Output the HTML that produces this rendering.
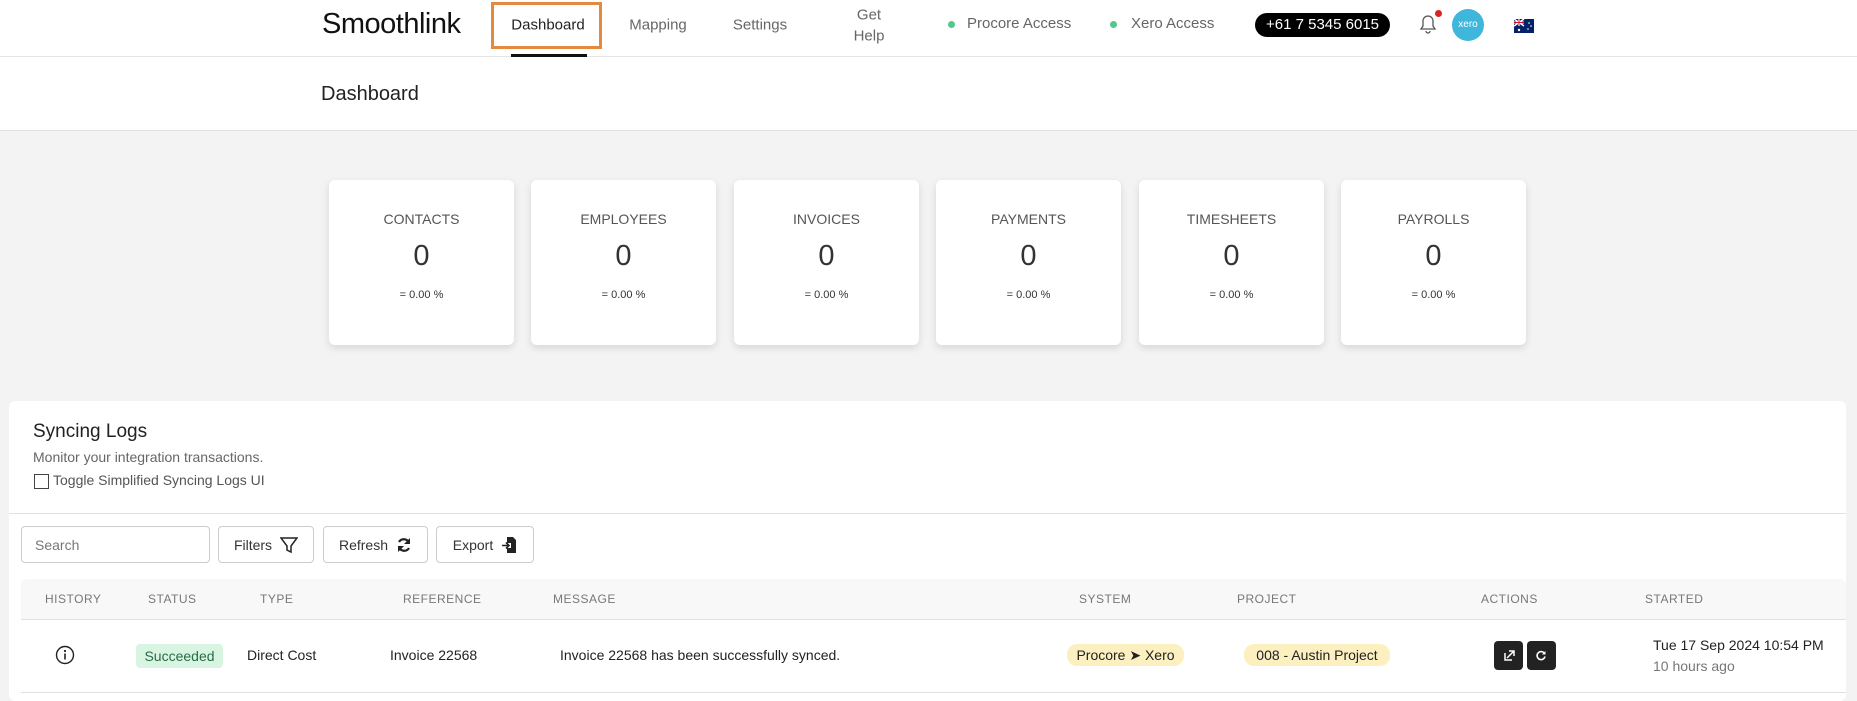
<!DOCTYPE html><html><head><meta charset="utf-8"><style>
*{box-sizing:border-box;margin:0;padding:0}
body{width:1857px;height:698px;overflow:hidden;background:#f3f3f3;font-family:"Liberation Sans",sans-serif;color:#222;position:relative}
.a{position:absolute;white-space:nowrap}
.hdr{position:absolute;left:0;top:0;width:1857px;height:57px;background:#fff;border-bottom:1px solid #e4e4e4}
.sub{position:absolute;left:0;top:57px;width:1857px;height:74px;background:#fff;border-bottom:1px solid #e0e0e0}
.nav{font-size:15px;color:#666;transform:translate(-50%,-50%)}
.card{position:absolute;top:180px;width:185px;height:165px;background:#fff;border-radius:6px;box-shadow:0 3px 8px rgba(0,0,0,.12);text-align:center}
.card .l{position:absolute;top:31px;width:100%;font-size:14px;color:#555}
.card .n{position:absolute;top:60px;width:100%;font-size:29px;color:#333}
.card .p{position:absolute;top:109px;width:100%;font-size:11px;color:#333}
.btn{position:absolute;top:526px;height:37px;border:1px solid #ccc;border-radius:4px;background:#fff;font-size:14px;color:#333;display:flex;align-items:center;justify-content:center;gap:8px}
.th{font-size:12px;color:#777;letter-spacing:.5px;top:592px}
.td{font-size:14px;color:#222;top:647px}
.badge{position:absolute;border-radius:10px;font-size:14px;display:flex;align-items:center;justify-content:center}
.ab{position:absolute;top:641px;width:29px;height:29px;background:#222;border-radius:4px}
</style></head><body>
<div class="hdr"></div>
<div class="a" style="left:322px;top:8px;font-size:29px;color:#111;font-weight:300;letter-spacing:-0.5px">Smoothlink</div>
<div class="a" style="left:491px;top:2px;width:111px;height:47px;border:3px solid #e38a3f"></div>
<div class="a nav" style="left:548px;top:25px;color:#222">Dashboard</div>
<div class="a" style="left:511px;top:54px;width:76px;height:3px;background:#111"></div>
<div class="a nav" style="left:658px;top:25px">Mapping</div>
<div class="a nav" style="left:760px;top:25px">Settings</div>
<div class="a nav" style="left:869px;top:15px">Get</div>
<div class="a nav" style="left:869px;top:36px">Help</div>
<div class="a" style="left:948px;top:21px;width:7px;height:7px;border-radius:50%;background:#4fc98c"></div>
<div class="a" style="left:967px;top:15px;font-size:15px;color:#666">Procore Access</div>
<div class="a" style="left:1110px;top:21px;width:7px;height:7px;border-radius:50%;background:#4fc98c"></div>
<div class="a" style="left:1131px;top:15px;font-size:15px;color:#666">Xero Access</div>
<div class="a" style="left:1255px;top:13px;width:135px;height:24px;border-radius:12px;background:#000;color:#fff;font-size:15px;text-align:center;line-height:24px">+61 7 5345 6015</div>
<svg class="a" style="left:1418px;top:13px" width="20" height="22" viewBox="0 0 20 22"><path d="M3 16h14l-2-3V8a5 5 0 0 0-10 0v5z M8 18a2 2 0 0 0 4 0" fill="none" stroke="#555" stroke-width="1.3"/></svg>
<div class="a" style="left:1435px;top:10px;width:7px;height:7px;border-radius:50%;background:#d22"></div>
<div class="a" style="left:1452px;top:9px;width:32px;height:32px;border-radius:50%;background:#3fb6dc;color:#fff;font-size:10px;text-align:center;line-height:32px">xero</div>
<svg class="a" style="left:1514px;top:19px" width="20" height="14" viewBox="0 0 20 14"><rect width="20" height="14" fill="#012169"/><path d="M0 0l10 7M10 0L0 7" stroke="#fff" stroke-width="1.5"/><path d="M5 0v7M0 3.5h10" stroke="#fff" stroke-width="2"/><path d="M5 0v7M0 3.5h10" stroke="#c8102e" stroke-width="1"/><circle cx="5" cy="11" r="1.2" fill="#fff"/><circle cx="15" cy="4" r=".8" fill="#fff"/><circle cx="17" cy="7" r=".8" fill="#fff"/><circle cx="14" cy="10" r=".8" fill="#fff"/></svg>
<div class="sub"></div>
<div class="a" style="left:321px;top:83px;font-size:20px;color:#222">Dashboard</div>

<div class="card" style="left:329px"><div class="l">CONTACTS</div><div class="n">0</div><div class="p">= 0.00 %</div></div>
<div class="card" style="left:531px"><div class="l">EMPLOYEES</div><div class="n">0</div><div class="p">= 0.00 %</div></div>
<div class="card" style="left:734px"><div class="l">INVOICES</div><div class="n">0</div><div class="p">= 0.00 %</div></div>
<div class="card" style="left:936px"><div class="l">PAYMENTS</div><div class="n">0</div><div class="p">= 0.00 %</div></div>
<div class="card" style="left:1139px"><div class="l">TIMESHEETS</div><div class="n">0</div><div class="p">= 0.00 %</div></div>
<div class="card" style="left:1341px"><div class="l">PAYROLLS</div><div class="n">0</div><div class="p">= 0.00 %</div></div>

<div class="a" style="left:9px;top:401px;width:1837px;height:300px;background:#fff;border-radius:6px"></div>
<div class="a" style="left:33px;top:421px;font-size:19px;color:#222">Syncing Logs</div>
<div class="a" style="left:33px;top:449px;font-size:14px;color:#666">Monitor your integration transactions.</div>
<div class="a" style="left:34px;top:474px;width:15px;height:15px;border:1.5px solid #444"></div>
<div class="a" style="left:53px;top:472px;font-size:14px;color:#555">Toggle Simplified Syncing Logs UI</div>
<div class="a" style="left:9px;top:513px;width:1837px;height:1px;background:#e2e2e2"></div>
<div class="btn" style="left:21px;width:189px;justify-content:flex-start;padding-left:13px;color:#777">Search</div>
<div class="btn" style="left:218px;width:96px">Filters <svg width="18" height="18" viewBox="0 0 18 18"><path d="M1 2h16l-6 8v6l-4-2v-4z" fill="none" stroke="#222" stroke-width="1.5"/></svg></div>
<div class="btn" style="left:323px;width:105px">Refresh <svg width="16" height="16" viewBox="0 0 16 16"><path d="M13 6A5.5 5.5 0 0 0 3 5M3 10a5.5 5.5 0 0 0 10 1" fill="none" stroke="#222" stroke-width="2.2"/><path d="M14 1v6H8zM2 15V9h6z" fill="#222"/></svg></div>
<div class="btn" style="left:436px;width:98px">Export <svg width="16" height="18" viewBox="0 0 16 18"><path d="M6 1h6l3 3v13H6v-5h4V7H6z" fill="#222"/><path d="M1 9.5h7M5 6.5l3 3-3 3" stroke="#222" stroke-width="1.6" fill="none"/></svg></div>

<div class="a" style="left:21px;top:579px;width:1825px;height:41px;background:#f8f8f8;border-bottom:1px solid #e0e0e0;border-radius:6px 6px 0 0"></div>
<div class="a th" style="left:45px">HISTORY</div>
<div class="a th" style="left:148px">STATUS</div>
<div class="a th" style="left:260px">TYPE</div>
<div class="a th" style="left:403px">REFERENCE</div>
<div class="a th" style="left:553px">MESSAGE</div>
<div class="a th" style="left:1079px">SYSTEM</div>
<div class="a th" style="left:1237px">PROJECT</div>
<div class="a th" style="left:1481px">ACTIONS</div>
<div class="a th" style="left:1645px">STARTED</div>
<div class="a" style="left:21px;top:692px;width:1825px;height:1px;background:#e0e0e0"></div>
<svg class="a" style="left:55px;top:645px" width="20" height="20" viewBox="0 0 20 20"><circle cx="10" cy="10" r="8.5" fill="none" stroke="#222" stroke-width="1.4"/><circle cx="10" cy="6" r="1.1" fill="#222"/><path d="M10 8.5v6" stroke="#222" stroke-width="1.6"/></svg>
<div class="badge" style="left:136px;top:644px;width:87px;height:24px;background:#d8f5e4;color:#2a6a45;border-radius:4px">Succeeded</div>
<div class="a td" style="left:247px">Direct Cost</div>
<div class="a td" style="left:390px">Invoice 22568</div>
<div class="a td" style="left:560px">Invoice 22568 has been successfully synced.</div>
<div class="badge" style="left:1067px;top:644px;width:117px;height:22px;background:#fcefc0;color:#222">Procore ➤ Xero</div>
<div class="badge" style="left:1244px;top:644px;width:146px;height:22px;background:#fcefc0;color:#222">008 - Austin Project</div>
<div class="ab" style="left:1494px"><svg width="29" height="29" viewBox="0 0 29 29"><path d="M11 12v7h7M15 10h5v5M20 10l-7 7" stroke="#fff" stroke-width="1.5" fill="none"/></svg></div>
<div class="ab" style="left:1527px"><svg width="29" height="29" viewBox="0 0 29 29"><path d="M17.5 12.5a4 4 0 1 0 0.5 3" stroke="#fff" stroke-width="1.6" fill="none"/><path d="M18.5 10v3.5H15z" fill="#fff"/></svg></div>
<div class="a" style="left:1653px;top:637px;font-size:14px;color:#222">Tue 17 Sep 2024 10:54 PM</div>
<div class="a" style="left:1653px;top:658px;font-size:14px;color:#777">10 hours ago</div>
</body></html>
